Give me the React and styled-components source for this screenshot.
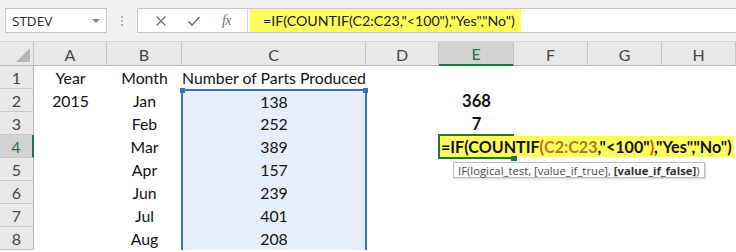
import React from "react";
import styled, { createGlobalStyle, css } from "styled-components";

const Global = createGlobalStyle`
  html, body { margin: 0; padding: 0; background: #ffffff; }
  body { width: 736px; height: 252px; overflow: hidden; }
  * { box-sizing: border-box; }
`;

const SHEET_FONT = `Lato, "Open Sans", sans-serif`;
const UI_FONT = `"Open Sans", "Noto Sans", sans-serif`;
const GREEN = "#217346";
const BLUE = "#3f6fc0";
const YELLOW = "#ffff5c";

const Root = styled.div`
  width: 736px;
  height: 252px;
  overflow: hidden;
  background: #ffffff;
`;

const FormulaBar = styled.div`
  height: 42px;
  display: flex;
  align-items: flex-start;
  padding: 8px 0 0 5px;
  background: #f1f1f1;
  border-bottom: 1px solid #d4d4d4;
`;

const NameBox = styled.div`
  width: 102px;
  height: 25px;
  background: #ffffff;
  border: 1px solid #c6c6c6;
  display: flex;
  align-items: center;
  justify-content: space-between;
  padding: 0 6px 0 6px;
  font-family: ${UI_FONT};
  font-size: 13.5px;
  color: #262626;
`;

const Caret = styled.span`
  width: 0;
  height: 0;
  border-left: 4px solid transparent;
  border-right: 4px solid transparent;
  border-top: 4px solid #8a8a8a;
  margin-top: 1px;
`;

const Grip = styled.div`
  width: 30px;
  height: 25px;
  display: flex;
  flex-direction: column;
  align-items: center;
  justify-content: center;
  gap: 2px;
`;

const Dot = styled.span`
  width: 2px;
  height: 2px;
  background: #b0b0b0;
`;

const InputBox = styled.div`
  flex: 1;
  height: 25px;
  display: flex;
  background: #ffffff;
  border: 1px solid #c6c6c6;
  border-right: none;
`;

const Buttons = styled.div`
  width: 110px;
  display: flex;
  align-items: center;
  justify-content: space-around;
  padding: 0 4px 0 6px;
  border-right: 1px solid #d6d6d6;
`;

const IconBtn = styled.span`
  width: 22px;
  display: flex;
  justify-content: center;
  align-items: center;
  color: #7a7a7a;
`;

const Fx = styled.span`
  font-family: "Liberation Serif", serif;
  font-style: italic;
  font-size: 14px;
  color: #707070;
  letter-spacing: -0.5px;
`;

const FormulaField = styled.div`
  flex: 1;
  padding-left: 2px;
  display: flex;
`;

const FormulaHighlight = styled.div`
  background: ${YELLOW};
  height: 100%;
  display: flex;
  align-items: center;
  padding: 0 6px 0 13px;
  font-family: ${SHEET_FONT};
  font-size: 14.2px;
  color: #1a1a1a;
  white-space: nowrap;
`;

const Sheet = styled.div`
  display: grid;
  grid-template-columns: 34px 73px 75px 184px 73px 75px 74px 74px 74px;
  grid-template-rows: 24px repeat(8, 23px);
  font-family: ${SHEET_FONT};
`;

const Corner = styled.div`
  background: #e8e8e8;
  border-right: 1px solid #c3c3c3;
  border-bottom: 1px solid #b8b8b8;
  position: relative;
  &::after {
    content: "";
    position: absolute;
    right: 3px;
    bottom: 3px;
    width: 0;
    height: 0;
    border-left: 14px solid transparent;
    border-bottom: 14px solid #b5b5b5;
  }
`;

const ColHead = styled.div`
  background: ${(p) => (p.$active ? "#d3d3d3" : "#e8e8e8")};
  border-right: 1px solid #c3c3c3;
  border-bottom: ${(p) => (p.$active ? `2px solid ${GREEN}` : "1px solid #b8b8b8")};
  color: ${(p) => (p.$active ? GREEN : "#444444")};
  display: flex;
  align-items: center;
  justify-content: center;
  font-size: 16px;
  padding-top: 1px;
`;

const RowHead = styled.div`
  background: ${(p) => (p.$active ? "#d3d3d3" : "#e8e8e8")};
  border-right: ${(p) => (p.$active ? `2px solid ${GREEN}` : "1px solid #b8b8b8")};
  border-bottom: 1px solid #c8c8c8;
  color: ${(p) => (p.$active ? GREEN : "#444444")};
  display: flex;
  align-items: center;
  justify-content: center;
  font-size: 16px;
`;

const Cell = styled.div`
  position: relative;
  display: flex;
  align-items: center;
  justify-content: center;
  white-space: nowrap;
  font-size: 15.8px;
  color: #111111;
  font-weight: ${(p) => (p.$bold ? 700 : 400)};
  ${(p) => p.$bold && css`font-size: 16.6px;`}
  ${(p) =>
    p.$range &&
    css`
      background: #e8eef8;
      border-left: 2px solid ${BLUE};
      border-right: 2px solid ${BLUE};
      margin-left: -1px;
      margin-right: -1px;
    `}
  ${(p) => p.$rangeTop && css`border-top: 2px solid ${BLUE};`}
`;

const Handle = styled.span`
  position: absolute;
  top: -3px;
  width: 5px;
  height: 5px;
  background: ${BLUE};
  ${(p) => (p.$side === "left" ? "left: -3px;" : "right: -3px;")}
`;

const EditCell = styled.div`
  position: relative;
  border-top: 2px solid ${GREEN};
  border-bottom: 2px solid ${GREEN};
  border-left: 2px solid ${GREEN};
  margin-left: -1px;
  margin-top: -1px;
  height: 25px;
`;

const Editor = styled.div`
  position: absolute;
  left: 0;
  top: 0;
  bottom: 0;
  z-index: 2;
  background: ${YELLOW};
  display: flex;
  align-items: center;
  padding: 0 2px 0 1px;
  font-weight: 700;
  font-size: 16.1px;
  color: #111111;
  white-space: nowrap;
`;

const Paren = styled.span`
  color: #c5561c;
`;

const Ref = styled.span`
  color: #b4762c;
`;

const FillHandle = styled.span`
  position: absolute;
  right: -3px;
  bottom: -4px;
  width: 6px;
  height: 5px;
  background: ${GREEN};
  z-index: 3;
`;

const Tooltip = styled.div`
  position: absolute;
  left: 13px;
  top: 26px;
  z-index: 4;
  height: 16px;
  padding: 0 4px;
  display: flex;
  align-items: center;
  background: #ffffff;
  border: 1px solid #bdbdbd;
  box-shadow: 1px 1px 2px rgba(0, 0, 0, 0.18);
  font-family: ${UI_FONT};
  font-size: 11.3px;
  color: #4a4a4a;
  white-space: nowrap;
  b { color: #333; font-weight: 700; }
`;

const columns = ["A", "B", "C", "D", "E", "F", "G", "H"];

const rows = [
  { a: "Year", b: "Month", c: "Number of Parts Produced" },
  { a: "2015", b: "Jan", c: "138", e: "368" },
  { b: "Feb", c: "252", e: "7" },
  { b: "Mar", c: "389", edit: true },
  { b: "Apr", c: "157" },
  { b: "Jun", c: "239" },
  { b: "Jul", c: "401" },
  { b: "Aug", c: "208" },
];

export default function App() {
  return (
    <Root>
      <Global />
      <FormulaBar>
        <NameBox>
          STDEV
          <Caret />
        </NameBox>
        <Grip>
          <Dot />
          <Dot />
          <Dot />
        </Grip>
        <InputBox>
          <Buttons>
            <IconBtn>
              <svg width="12" height="12" viewBox="0 0 12 12">
                <path d="M1.5 1.5 L10.5 10.5 M10.5 1.5 L1.5 10.5" stroke="#767676" strokeWidth="1.4" fill="none" />
              </svg>
            </IconBtn>
            <IconBtn>
              <svg width="14" height="12" viewBox="0 0 14 12">
                <path d="M1.5 6.5 L5 10 L12.5 2" stroke="#767676" strokeWidth="1.6" fill="none" />
              </svg>
            </IconBtn>
            <IconBtn>
              <Fx>fx</Fx>
            </IconBtn>
          </Buttons>
          <FormulaField>
            <FormulaHighlight>=IF(COUNTIF(C2:C23,"&lt;100"),"Yes","No")</FormulaHighlight>
          </FormulaField>
        </InputBox>
      </FormulaBar>
      <Sheet>
        <Corner />
        {columns.map((c) => (
          <ColHead key={c} $active={c === "E"}>
            {c}
          </ColHead>
        ))}
        {rows.map((r, i) => {
          const n = i + 1;
          const inRange = n >= 2;
          return (
            <React.Fragment key={n}>
              <RowHead $active={n === 4}>{n}</RowHead>
              <Cell>{r.a}</Cell>
              <Cell>{r.b}</Cell>
              <Cell $range={inRange} $rangeTop={n === 2}>
                {r.c}
                {n === 2 && <Handle $side="left" />}
                {n === 2 && <Handle $side="right" />}
              </Cell>
              <Cell />
              {r.edit ? (
                <EditCell>
                  <Editor>
                    =IF(COUNTIF<Paren>(</Paren>
                    <Ref>C2:C23</Ref>,"&lt;100"<Paren>)</Paren>,"Yes","No")
                  </Editor>
                  <FillHandle />
                  <Tooltip>
                    IF(logical_test, [value_if_true],&nbsp;<b>[value_if_false]</b>)
                  </Tooltip>
                </EditCell>
              ) : (
                <Cell $bold>{r.e}</Cell>
              )}
              <Cell />
              <Cell />
              <Cell />
            </React.Fragment>
          );
        })}
      </Sheet>
    </Root>
  );
}
